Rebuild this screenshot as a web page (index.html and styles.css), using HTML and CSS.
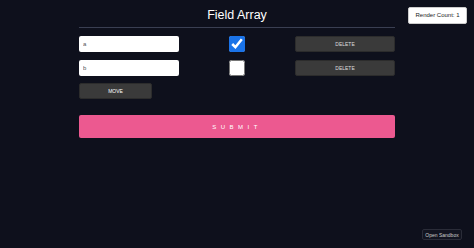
FILE: index.html
```html
<!DOCTYPE html>
<html lang="en">
<head>
  <meta charset="UTF-8">
  <meta name="viewport" content="width=device-width, initial-scale=1.0">
  <title>Field Array</title>
  <link rel="stylesheet" href="styles.css">
</head>
<body>
  <div class="render-count">Render Count: 1</div>

  <form class="container">
    <h1>Field Array</h1>

    <div class="row">
      <input class="text-input" type="text" value="a">
      <input class="check" type="checkbox" checked>
      <button type="button" class="btn">Delete</button>
    </div>
    <div class="row">
      <input class="text-input" type="text" value="b">
      <input class="check" type="checkbox">
      <button type="button" class="btn">Delete</button>
    </div>

    <button type="button" class="btn move">Move</button>

    <button type="submit" class="submit">Submit</button>
  </form>

  <button class="sandbox">Open Sandbox</button>
</body>
</html>
```

FILE: styles.css
```css
* {
  box-sizing: border-box;
}

body {
  margin: 0;
  height: 248px;
  background: #0e101c;
  font-family: Helvetica, "Liberation Sans", Arial, sans-serif;
  color: #fff;
}

.container {
  width: 316px;
  margin: 0 auto;
  display: flex;
  flex-direction: column;
}

h1 {
  margin: 0 0 8px 0;
  padding: 8px 0 4px;
  font-size: 12.5px;
  line-height: 15px;
  font-weight: 400;
  text-align: center;
  border-bottom: 1px solid #3a3f52;
}

.row {
  display: flex;
  justify-content: space-between;
  align-items: center;
  margin-bottom: 8px;
}

.text-input {
  width: 100px;
  height: 16px;
  margin: 0;
  padding: 0 4px;
  border: none;
  border-radius: 2px;
  background: #fff;
  font-family: inherit;
  font-size: 6px;
  color: #555;
}

.check {
  width: 16px;
  height: 16px;
  margin: 0;
  accent-color: #1a73e8;
}

.btn {
  width: 100px;
  height: 16px;
  margin: 0;
  padding: 0;
  border: 1px solid #2c2c2c;
  border-radius: 2px;
  background: #3a3a3a;
  color: #ddd;
  font-family: inherit;
  font-size: 5px;
  text-transform: uppercase;
}

.move {
  width: 73px;
  margin-top: -1px;
  color: #fff;
}

.submit {
  margin-top: 16px;
  height: 23px;
  padding: 0;
  border: none;
  border-radius: 2px;
  background: #ec5990;
  color: #fff;
  font-family: inherit;
  font-size: 6px;
  letter-spacing: 4.5px;
  text-transform: uppercase;
}

.render-count {
  position: absolute;
  top: 7px;
  right: 7px;
  width: 59px;
  height: 17px;
  line-height: 15px;
  border: 1px solid #ccc;
  border-radius: 2px;
  background: #fff;
  color: #222;
  font-size: 6px;
  text-align: center;
}

.sandbox {
  position: absolute;
  right: 12px;
  bottom: 8px;
  width: 40px;
  height: 11px;
  padding: 0;
  border: 1px solid #2a2c38;
  border-radius: 2px;
  background: #121420;
  color: #ccc;
  font-family: inherit;
  font-size: 5px;
}
```
